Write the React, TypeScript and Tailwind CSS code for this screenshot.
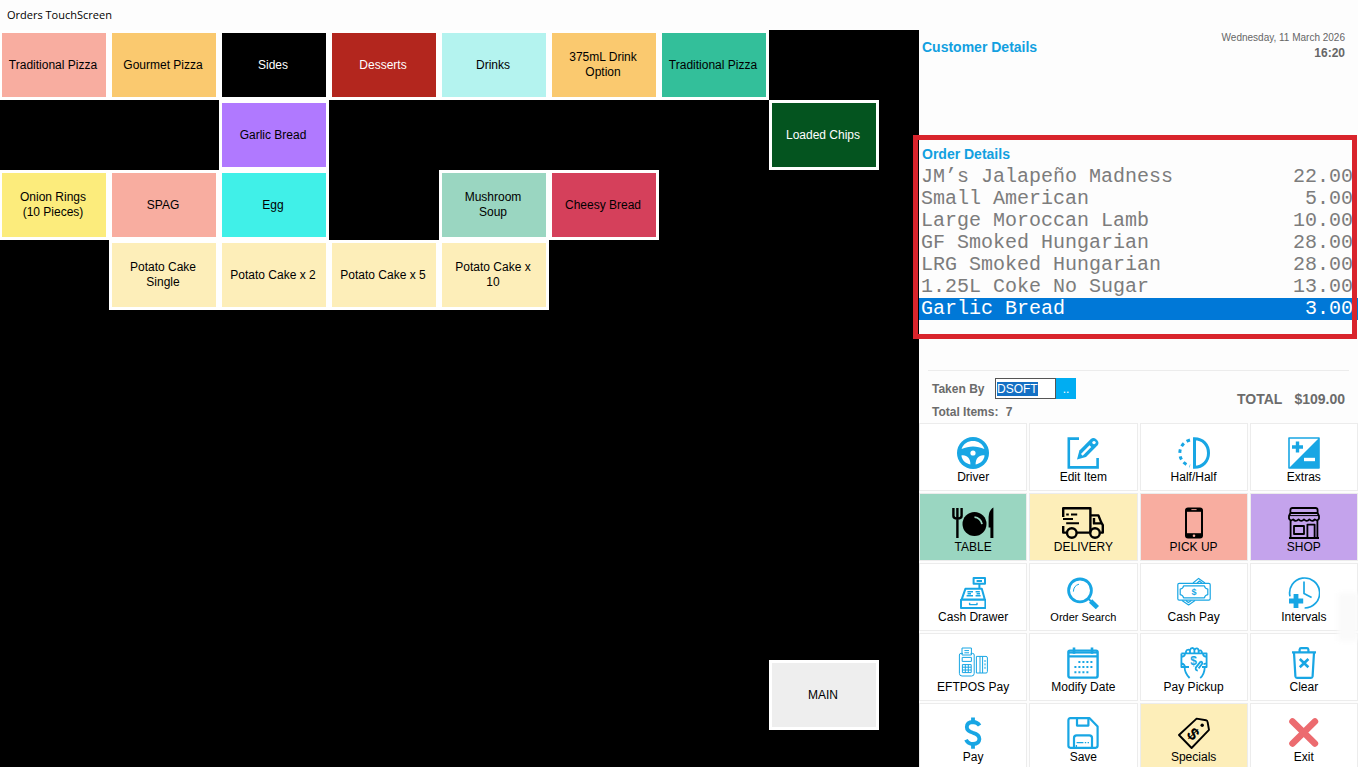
import { useEffect, useRef, type ReactNode } from "react";
import clsx from "clsx";

type MenuItem = { title: string; color: string; cell: string };
type OrderLine = { name: string; price: string };
type Action = { title: string; icon: ReactNode; className?: string; small?: boolean };

const menu: MenuItem[] = [
  { title: "Traditional Pizza", color: "bg-[#f8ada0]", cell: "col-start-1 row-start-1" },
  { title: "Gourmet Pizza", color: "bg-[#fac96f]", cell: "col-start-2 row-start-1" },
  { title: "Sides", color: "bg-black text-white", cell: "col-start-3 row-start-1" },
  { title: "Desserts", color: "bg-[#b3261e] text-white", cell: "col-start-4 row-start-1" },
  { title: "Drinks", color: "bg-[#b4f3ef]", cell: "col-start-5 row-start-1" },
  { title: "375mL Drink Option", color: "bg-[#fac96f]", cell: "col-start-6 row-start-1" },
  { title: "Traditional Pizza", color: "bg-[#33bf9a]", cell: "col-start-7 row-start-1" },
  { title: "Garlic Bread", color: "bg-[#b079ff]", cell: "col-start-3 row-start-2" },
  { title: "Loaded Chips", color: "bg-[#04541f] text-white", cell: "col-start-8 row-start-2" },
  { title: "Onion Rings\n(10 Pieces)", color: "bg-[#fcec7c]", cell: "col-start-1 row-start-3" },
  { title: "SPAG", color: "bg-[#f8ada0]", cell: "col-start-2 row-start-3" },
  { title: "Egg", color: "bg-[#40f0e8]", cell: "col-start-3 row-start-3" },
  { title: "Mushroom\nSoup", color: "bg-[#9ad6c1]", cell: "col-start-5 row-start-3" },
  { title: "Cheesy Bread", color: "bg-[#d5405b]", cell: "col-start-6 row-start-3" },
  { title: "Potato Cake Single", color: "bg-[#fdeeb9]", cell: "col-start-2 row-start-4" },
  { title: "Potato Cake x 2", color: "bg-[#fdeeb9]", cell: "col-start-3 row-start-4" },
  { title: "Potato Cake x 5", color: "bg-[#fdeeb9]", cell: "col-start-4 row-start-4" },
  { title: "Potato Cake x 10", color: "bg-[#fdeeb9]", cell: "col-start-5 row-start-4" },
  { title: "MAIN", color: "bg-[#eeeeee]", cell: "col-start-8 row-start-10" },
];

const order: OrderLine[] = [
  { name: "JM’s Jalapeño Madness", price: "22.00" },
  { name: "Small American", price: "5.00" },
  { name: "Large Moroccan Lamb", price: "10.00" },
  { name: "GF Smoked Hungarian", price: "28.00" },
  { name: "LRG Smoked Hungarian", price: "28.00" },
  { name: "1.25L Coke No Sugar", price: "13.00" },
  { name: "Garlic Bread", price: "3.00" },
];

const Icon = ({ width = 32, stroke = 2, children }: { width?: number; stroke?: number; children: ReactNode }) => (
  <svg
    width={width}
    height={32}
    viewBox={`0 0 ${width} 32`}
    fill="none"
    stroke="currentColor"
    strokeWidth={stroke}
    strokeLinejoin="round"
    aria-hidden="true"
  >
    {children}
  </svg>
);

const DriverIcon = () => (
  <Icon>
    <circle cx="16" cy="16" r="16" fill="currentColor" stroke="none" />
    <g fill="white" stroke="none">
      <path d="M4.6 12C8 1.4 24 1.4 27.4 12C20 8.6 12 8.6 4.6 12Z" />
      <path d="M4.4 18.5C9.5 17.5 13.6 21.5 13.4 27.4C8.5 26.6 5 23.2 4.4 18.5Z" />
      <path d="M27.6 18.5C22.5 17.5 18.4 21.5 18.6 27.4C23.5 26.6 27 23.2 27.6 18.5Z" />
      <circle cx="16" cy="16" r="2.6" />
    </g>
  </Icon>
);

const EditIcon = () => (
  <Icon stroke={2.6}>
    <path d="M12 1.6H1.8V30.4H30.6V21" strokeLinejoin="miter" />
    <path d="M10 22.4L12.4 13.4L23.8 2Q26.4 -0.2 29 2L30.4 3.4Q32.6 6 30.4 8.6L19 20Z" stroke="none" fill="currentColor" />
    <path d="M14.8 17.8L23.4 9.2" stroke="white" strokeWidth="2.4" />
    <circle cx="27" cy="5.6" r="1.7" fill="white" stroke="none" />
  </Icon>
);

const HalfIcon = () => (
  <Icon stroke={3}>
    <path d="M16.5 1.8V30.2C25 30.2 30.5 24 30.5 16S25 1.8 16.5 1.8Z" strokeLinejoin="miter" />
    <path d="M12 3C5.6 4.8 1.8 10 1.8 16S5.6 27.2 12 29" strokeDasharray="3.6 3.4" />
  </Icon>
);

const ExtrasIcon = () => (
  <Icon>
    <rect x="1" y="1" width="30" height="30" strokeWidth="1.6" />
    <path d="M31 1V31H1Z" fill="currentColor" stroke="none" />
    <path d="M9.5 4.5V15.5M4 10H15" strokeWidth="3.4" />
    <path d="M16 22.5H27" stroke="white" strokeWidth="3.4" />
  </Icon>
);

const TableIcon = () => (
  <Icon width={42}>
    <path d="M1.4 1V9Q1.4 11.6 5.4 11.6Q9.6 11.6 9.6 9V1M5.4 1V31" strokeWidth="2.4" />
    <circle cx="22.5" cy="17" r="12" fill="currentColor" stroke="none" />
    <path d="M22.5 10.2A8 8 0 0 1 30 17.2" stroke="#9ad6c1" strokeWidth="1.8" />
    <path d="M41.4 0.6V31H38.4V20.6H36.6V10Q37 3 41.4 0.6Z" fill="currentColor" stroke="none" />
  </Icon>
);

const DeliveryIcon = () => (
  <Icon width={42}>
    <path d="M1.2 10V1.2H28.4V25.6M1.2 19V25.6H4.4M15 25.6H27.6M28.4 8.4H36.4L39.2 15.4L40.8 18.2V25.6H38.4M32 11V16.4H38.8" strokeWidth="2.4" />
    <circle cx="9.8" cy="26" r="4.8" strokeWidth="2.4" />
    <circle cx="33" cy="26" r="4.8" strokeWidth="2.4" />
    <path d="M4.2 7.6H6.8M9 7.6H15.2M1 12H11M4.2 16.2H17" strokeWidth="2" />
  </Icon>
);

const PhoneIcon = () => (
  <Icon width={20}>
    <rect x="1" y="0.4" width="18" height="31.2" rx="3" fill="currentColor" stroke="none" />
    <rect x="3" y="4.8" width="14" height="21.4" fill="#f8ada0" stroke="none" />
    <path d="M7.4 2.6H12.6" stroke="#f8ada0" strokeWidth="0.9" />
    <circle cx="10" cy="28.8" r="1.3" fill="#f8ada0" stroke="none" />
  </Icon>
);

const ShopIcon = () => (
  <Icon stroke={1.8}>
    <path d="M4.4 1H27.6Q29.4 1 29.6 3V6H2.4V3Q2.6 1 4.4 1ZM2.4 6L1 9V11.5Q2.5 14.6 5.2 12.4Q7.5 15.4 10.6 12.4Q13.2 15.4 16 12.4Q18.8 15.4 21.4 12.4Q24.5 15.4 26.8 12.4Q29.5 14.6 31 11.5V9L29.6 6" />
    <path d="M2.6 14V31H29.4V14M6 19H16V27H6ZM19.4 31V17.6H26.6V31M1 31H31" />
    <path d="M1.6 8.6H30.4" strokeWidth="1" />
  </Icon>
);

const DrawerIcon = () => (
  <Icon width={26} stroke={2}>
    <path d="M13.6 1H25V6.8H13.6ZM19.4 7V12M16.6 4H22" />
    <path d="M5.4 11.8H21.8L24.8 22.6H1.6ZM1 22.8H25.4V31H1Z" />
    <path d="M7.4 14.8H13M15.6 14.8H19.8M6.6 18.8H13M15.6 18.8H20.6M7.6 16.8H11M16.6 16.8H20" strokeWidth="1.4" />
    <path d="M9.6 25.8V27.6H17V25.8" strokeWidth="1.4" />
  </Icon>
);

const SearchIcon = () => (
  <Icon>
    <circle cx="13" cy="13.4" r="11.4" strokeWidth="2.8" />
    <path d="M6.4 14.6Q6.6 8.6 12 7.2" strokeWidth="1" />
    <path d="M21.4 21.8L24 24.4" strokeWidth="2" />
    <path d="M23.6 24L30.4 30.6" strokeWidth="4.6" />
  </Icon>
);

const CashIcon = () => (
  <Icon width={34} stroke={1.2}>
    <rect x="0.8" y="6.4" width="32.4" height="16.8" rx="1.4" />
    <path d="M6.6 8.8H27.4Q28 11.6 30.8 12V17.6Q28 18 27.4 20.8H6.6Q6 18 3.2 17.6V12Q6 11.6 6.6 8.8Z" />
    <path d="M16 6L21.6 1.4L28 6M20 6.2L22.4 4L25 6.2M5 23.6L11.6 28L18 23.6M8.8 23.6L11.4 25.6L14.4 23.6" />
    <text x="17" y="18.2" fontSize="9" fontWeight="bold" fontFamily="Liberation Sans, sans-serif" textAnchor="middle" fill="currentColor" stroke="none">$</text>
  </Icon>
);

const IntervalsIcon = () => (
  <Icon stroke={1.7}>
    <path d="M2 19.4A15 15 0 1 1 16.6 31" />
    <path d="M16 4.4V16.4L23.6 20.4" />
    <path d="M8 17V31M1 24H15.2" strokeWidth="4.8" />
  </Icon>
);

const EftposIcon = () => (
  <Icon width={30} stroke={1}>
    <path d="M5 6.4H3Q1.4 6.4 1.4 8V26.4Q1.4 29 4 29H13.6Q16.2 29 16.2 26.4V8Q16.2 6.4 14.6 6.4H12.6M4 8V1H13.4V8Z" />
    <path d="M6.4 3.6H11M6.4 5.8H11M4.2 10.4H13.4V14.4H4.2ZM4.4 17.6H13.2V25.6H4.4ZM7.3 17.6V25.6M10.3 17.6V25.6M4.4 20.2H13.2M4.4 23H13.2" />
    <path d="M18.4 9.4H28Q29.4 9.4 29.4 11V24.6Q29.4 26 28 26H18.4ZM22 9.4V26M24.6 9.4V26" />
    <path d="M27 13V22.4" strokeDasharray="2 1.4" />
  </Icon>
);

const CalendarIcon = () => (
  <Icon>
    <path d="M1.4 5Q1.4 3.6 3 3.6H29Q30.6 3.6 30.6 5V28.6Q30.6 30.6 29 30.6H3Q1.4 30.6 1.4 28.6ZM1.4 9.4H30.6" strokeWidth="2.4" />
    <path d="M2 5.6H30" strokeWidth="2" />
    <path d="M7 0.4V6.8M25 0.4V6.8" strokeWidth="2.6" />
    <path d="M11.4 15H26M7.4 20H26M7.4 25.2H22.4" strokeWidth="2" strokeDasharray="2 2" />
  </Icon>
);

const PickupIcon = () => (
  <Icon width={28} stroke={1.8}>
    <path d="M1.4 6.4H26.6V20H22M9 20H1.4V6.4M1.6 10Q5 9.6 5 6.6M26.4 10Q23 9.6 23 6.6M1.6 16.4Q4.6 17 5 20M26.4 16.4Q24.4 16.4 23.6 17.6" />
    <path d="M6 6.2V4.4Q6.4 2.6 8.4 2.6Q9.6 2.6 10 4M10 6V3Q10.6 1 12.4 1Q14 1 14.4 3V6M14.6 3Q15.4 1.2 17 1.4Q18.6 1.8 18.6 3.6V6M18.8 4Q19.8 3 21 3.6Q22 4.4 22 6" />
    <path d="M4.6 20Q4.6 26 9.6 31M20.2 31Q24.4 27.6 24.8 20M20.6 14.6Q17.8 18 15.8 20.6Q15.2 23.4 17.8 23.6M20.6 14.6Q22.4 14.2 22.2 16.8L18.6 21.4" />
    <text x="13.6" y="17.6" fontSize="12" fontWeight="bold" fontFamily="Liberation Sans, sans-serif" textAnchor="middle" fill="currentColor" stroke="none">$</text>
  </Icon>
);

const ClearIcon = () => (
  <Icon width={26}>
    <path d="M1 5.4H25M3 5.6L4.4 29.4Q4.6 30.8 6 30.8H20Q21.4 30.8 21.6 29.4L23 5.6M8.6 5V2.6Q8.8 1.2 10 1.2H16Q17.2 1.2 17.4 2.6V5" strokeWidth="2.2" />
    <path d="M8.8 12L17.4 20.2M17.4 12L8.8 20.2" strokeWidth="2.6" />
  </Icon>
);

const PayIcon = () => (
  <Icon width={18}>
    <path d="M9 0.4V5M9 27V31.8" strokeWidth="3.8" />
    <path d="M15.6 8.6Q13.4 5 9 5Q3 5.2 2.8 10Q2.8 14 9 15.8Q15.4 17.4 15.4 22Q15 27 9 27Q4 27 2 22.8" strokeWidth="3.8" />
  </Icon>
);

const SaveIcon = () => (
  <Icon>
    <path d="M3.4 1.2H22.6L30.6 9.4V28.6Q30.6 30.8 28.6 30.8H3.4Q1.4 30.8 1.4 28.6V3.4Q1.4 1.2 3.4 1.2Z" strokeWidth="2.2" />
    <path d="M10 1.4V8.6H21.4V1.4M7 30.6V21Q7 18.4 9.6 18.4H22.4Q25 18.4 25 21V30.6" strokeWidth="2.2" />
    <path d="M9.6 25.6H16.4M17.8 25.6H19.2M20.6 25.6H22M9.4 28V30" strokeWidth="1.3" />
  </Icon>
);

const SpecialsIcon = () => (
  <Icon>
    <path d="M1 18L18.6 1.6L28 3.2Q29.4 3.6 29.6 5L31 12.8L13.6 31Z" strokeWidth="1.9" />
    <circle cx="24.2" cy="8.2" r="1.7" fill="currentColor" stroke="none" />
    <text x="15" y="22.8" transform="rotate(45 15 17.4)" fontSize="17" fontWeight="bold" fontFamily="Liberation Sans, sans-serif" textAnchor="middle" fill="currentColor" stroke="none">$</text>
  </Icon>
);

const ExitIcon = () => (
  <Icon>
    <path d="M4.4 4.4L27 26.6M27 4.4L4.4 26.6" stroke="#ec6b6f" strokeWidth="6.4" strokeLinecap="round" />
  </Icon>
);

const actions: Action[] = [
  { title: "Driver", icon: <DriverIcon /> },
  { title: "Edit Item", icon: <EditIcon /> },
  { title: "Half/Half", icon: <HalfIcon /> },
  { title: "Extras", icon: <ExtrasIcon /> },
  { title: "TABLE", icon: <TableIcon />, className: "bg-[#9ad6c1]" },
  { title: "DELIVERY", icon: <DeliveryIcon />, className: "bg-[#fdeeb9]" },
  { title: "PICK UP", icon: <PhoneIcon />, className: "bg-[#f8ada0]" },
  { title: "SHOP", icon: <ShopIcon />, className: "bg-[#c4a3ec]" },
  { title: "Cash Drawer", icon: <DrawerIcon /> },
  { title: "Order Search", icon: <SearchIcon />, small: true },
  { title: "Cash Pay", icon: <CashIcon /> },
  { title: "Intervals", icon: <IntervalsIcon /> },
  { title: "EFTPOS Pay", icon: <EftposIcon /> },
  { title: "Modify Date", icon: <CalendarIcon /> },
  { title: "Pay Pickup", icon: <PickupIcon /> },
  { title: "Clear", icon: <ClearIcon /> },
  { title: "Pay", icon: <PayIcon /> },
  { title: "Save", icon: <SaveIcon /> },
  { title: "Specials", icon: <SpecialsIcon />, className: "bg-[#fdeeb9]" },
  { title: "Exit", icon: <ExitIcon /> },
];

const MenuButton = ({ item }: { item: MenuItem }) => (
  <button
    type="button"
    className={clsx(
      "border-3 border-white pr-2 pl-[6px] text-center text-xs leading-[15px] whitespace-pre-line",
      item.color,
      item.cell
    )}
  >
    {item.title}
  </button>
);

const ActionButton = ({ action }: { action: Action }) => (
  <button
    type="button"
    className={clsx(
      "flex h-[68px] flex-col items-center border border-[#ececec] pt-[13px]",
      action.className ? action.className : "bg-white"
    )}
  >
    <span className={action.className ? "text-black" : "text-[#18a6e4]"}>{action.icon}</span>
    <span className={clsx("leading-4 text-black", action.small ? "text-[11px]" : "text-xs")}>{action.title}</span>
  </button>
);

const OrderTable = () => (
  <table className="w-full border-collapse font-['Liberation_Mono',monospace] text-xl text-[#7c7c7c]">
    <tbody>
      {order.map((line, index) => (
        <tr key={line.name} className={clsx("h-[22px]", index === order.length - 1 && "bg-[#0078d7] text-white")}>
          <td className="p-0 pl-[2px] leading-[22px]">{line.name}</td>
          <td className="p-0 pr-[5px] text-right leading-[22px]">{line.price}</td>
        </tr>
      ))}
    </tbody>
  </table>
);

export default function App() {
  const takenBy = useRef<HTMLInputElement>(null);

  useEffect(() => {
    takenBy.current?.focus();
    takenBy.current?.select();
  }, []);

  return (
    <div className="flex h-screen flex-col overflow-hidden bg-[#fdfdfd] font-['Liberation_Sans',Arial,sans-serif]">
      <header className="h-[30px] shrink-0 pl-[7px]">
        <h1 className="font-['Open_Sans',sans-serif] text-[11px] leading-[30px] text-black">Orders TouchScreen</h1>
      </header>

      <div className="flex min-h-0 flex-1">
        <main className="min-w-0 flex-1 overflow-hidden bg-black">
          <div className="-ml-px grid grid-cols-[repeat(8,110px)] grid-rows-[repeat(10,70px)]">
            {menu.map((item) => (
              <MenuButton key={item.cell} item={item} />
            ))}
          </div>
        </main>

        <aside className="flex w-[439px] shrink-0 flex-col">
          <section className="flex h-[105px] shrink-0 justify-between pr-[13px] pl-[3px]">
            <h2 className="pt-[7px] text-sm font-bold text-[#12a0e0]">Customer Details</h2>
            <div className="pt-px text-right text-[#666666]">
              <p className="text-[10px] leading-[14px]">Wednesday, 11 March 2026</p>
              <p className="text-xs font-bold">16:20</p>
            </div>
          </section>

          <section className="relative h-[204px] shrink-0 pt-2">
            <h2 className="pl-[3px] text-sm leading-[23px] font-bold text-[#12a0e0]">Order Details</h2>
            <OrderTable />
            <div className="pointer-events-none absolute top-0 right-px bottom-0 -left-[6px] border-5 border-[#d9242c]" />
          </section>

          <section className="mx-[9px] mt-[31px] flex h-[53px] shrink-0 justify-between border-t border-[#ececec] pr-1 pl-1 text-[#6b6b6b]">
            <div className="pt-[7px] text-xs font-bold">
              <div className="flex h-[21px] items-center">
                <label htmlFor="taken-by" className="w-[63px]">
                  Taken By
                </label>
                <input
                  id="taken-by"
                  ref={takenBy}
                  defaultValue="DSOFT"
                  className="h-[21px] w-[61px] border border-[#555555] bg-white px-px text-xs font-normal text-black outline-none selection:bg-[#1470c4] selection:text-white"
                />
                <button type="button" className="h-[21px] w-5 bg-[#00adf2] font-normal text-white">
                  ..
                </button>
              </div>
              <p className="pt-[3px] leading-5">
                Total Items: <span className="ml-1">7</span>
              </p>
            </div>
            <p className="flex gap-3 pt-[18px] text-sm font-bold">
              <span>TOTAL</span>
              <span>$109.00</span>
            </p>
          </section>

          <nav className="relative grid shrink-0 grid-cols-4 gap-[2px]">
            {actions.map((action) => (
              <ActionButton key={action.title} action={action} />
            ))}
            <div className="pointer-events-none absolute top-[170px] right-0 h-12 w-5 bg-[#fafafa] blur-[2px]" />
          </nav>
        </aside>
      </div>
    </div>
  );
}
